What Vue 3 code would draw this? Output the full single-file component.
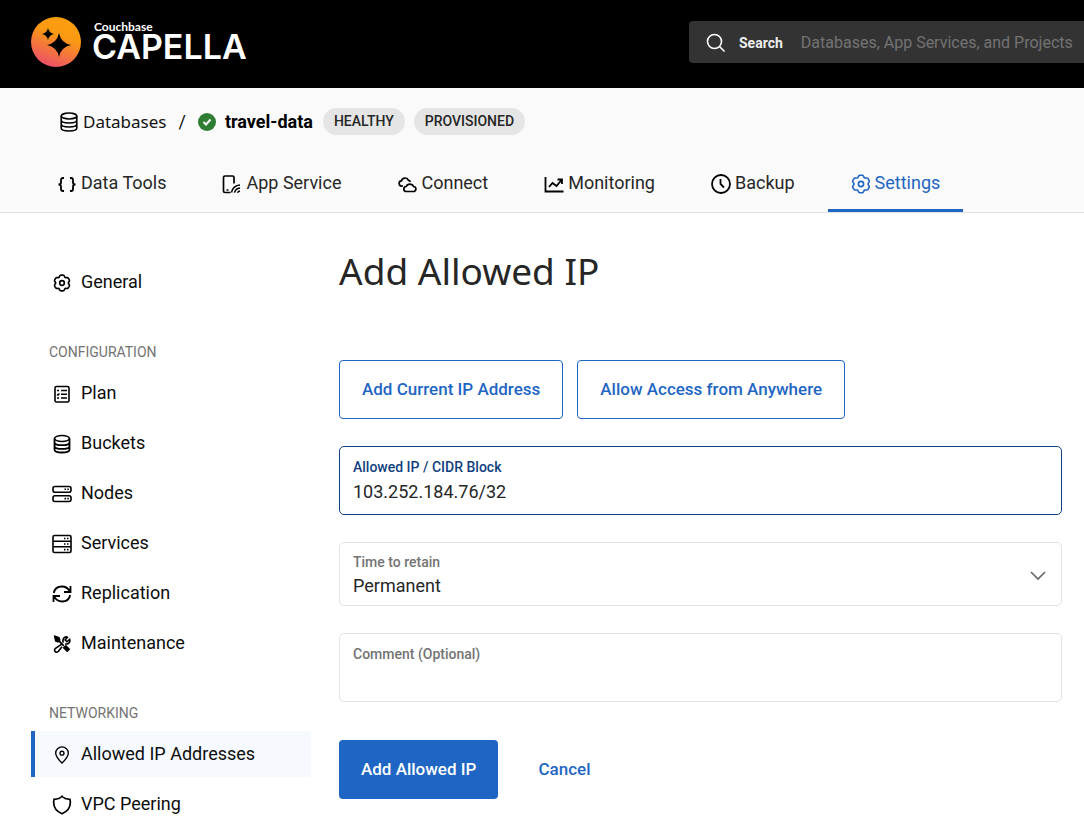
<script setup>
import { ref } from 'vue'

const ip = ref('103.252.184.76/32')
const retain = ref('Permanent')
const comment = ref('')
const search = ref('')

// Six-lobed cog outline, sampled around the centre
const cog = Array.from({ length: 72 }, (_, i) => {
  const a = (i * Math.PI) / 36
  const r = 8.2 - 0.9 * Math.cos(6 * a) - 0.3 * Math.cos(12 * a)
  return `${(10 + r * Math.cos(a)).toFixed(2)} ${(10 + r * Math.sin(a)).toFixed(2)}`
}).join('L')
const gear = `<path d="M${cog}z"/><circle cx="10" cy="10" r="2.600"/>`

const tabs = [
  { name: 'Data Tools', icon: '<path d="M7 4H6Q4 4 4 6V8.500Q4 10.500 1.500 10.500Q4 10.500 4 12.500V15Q4 17 6 17H7M13 4h1q2 0 2 2V8.500q0 2 2.500 2q-2.500 0-2.500 2V15q0 2-2 2h-1" stroke-width="1.800"/>' },
  { name: 'App Service', icon: '<path d="M8.500 18.500H3Q1.500 18.500 1.500 17V3.500Q1.500 2 3 2h7.500q1.500 0 1.500 1.500V9.500M4.500 16h2" stroke-width="1.700"/><path d="M9.500 18.500Q11 11.500 18 11M12.500 18.700Q13.500 14.500 18 14M15.500 18.800Q16 17.300 18 17" stroke-width="1.500"/>' },
  { name: 'Connect', icon: '<path d="M6 12H5A2.600 2.600 0 0 1 4.500 6.800A3.700 3.700 0 0 1 11.500 6.300Q13 6.500 13.300 8M9.500 17.500a2.500 2.500 0 0 1-.3-5a4 4 0 0 1 7.300 0a2.500 2.500 0 0 1-.2 5z" stroke-width="1.700"/>' },
  { name: 'Monitoring', icon: '<path d="M1.500 3v14.500H19.500M5 13l3.500-4 4 3L17.500 6M13.500 5.500h4.500V10" stroke-width="1.800"/>' },
  { name: 'Backup', icon: '<circle cx="10" cy="10" r="9" stroke-width="1.800"/><path d="M9.500 5v5l3.500 3.500" stroke-width="1.800"/>' },
  { name: 'Settings', active: true, icon: gear }
]

const groups = [
  { items: [{ name: 'General', small: true, icon: gear }] },
  {
    title: 'CONFIGURATION',
    items: [
      { name: 'Plan', icon: '<rect x="3" y="2.500" width="14" height="15.500" rx="1.500"/><path d="M9 6.500h6M9 10.250h6M9 14h6M5 6.500h2M5 14h2M5 10.500l1 .5 1.500-1.500" stroke-width="1.500"/>' },
      { name: 'Buckets', icon: '<ellipse cx="10" cy="4.500" rx="7.500" ry="3"/><path d="M2.500 4.500V15.500C2.500 19.500 17.500 19.500 17.500 15.500V4.500M2.500 8.200c0 4 15 4 15 0M2.500 11.900c0 4 15 4 15 0" stroke-width="1.800"/>' },
      { name: 'Nodes', icon: '<rect x="1" y="2.500" width="18" height="5.700" rx="2"/><rect x="1" y="11.800" width="18" height="5.700" rx="2"/><path d="M12.500 5.300h1.500M15.300 5.300h1.500M12.500 14.600h1.500M15.300 14.600h1.500"/>' },
      { name: 'Services', icon: '<rect x="1" y="1.500" width="18" height="17" rx="1.500"/><path d="M1 7.200h18M1 12.800h18M12 4.500h1.500M15 4.500h1.500M12 10h1.500M15 10h1.500M12 15.600h1.500M15 15.600h1.500"/>' },
      { name: 'Replication', icon: '<path d="M1.800 9Q3 2.500 10 2.500Q15 2.500 18 7.500M18.500 2v6h-6.500M18.200 11Q17 17.500 10 17.500Q5 17.500 2 12.500M1.500 18v-6H8" stroke-width="1.800"/>' },
      { name: 'Maintenance', small: true, icon: '<path d="M2 1.500l4.500 1.500 1 2.500-2 2-2.500-1z" fill="currentColor"/><path d="M6 6l6 6" stroke-width="2"/><path d="M12.500 12.500l5 5" stroke-width="5"/><path d="M10.500 9.500L2.500 15q-1.500 2 0 3.500t3.500-.5l4-5M11.500 8.500q-1.500-4 1.500-6 2-.8 3 0l-2.500 3 2 2 3-2.500q1 3-1.500 4.500-2 1-3.500 0"/>' }
    ]
  },
  {
    title: 'NETWORKING',
    items: [
      { name: 'Allowed IP Addresses', small: true, active: true, icon: '<path d="M10 19Q3 12 3 8a7 7 0 0 1 14 0Q17 12 10 19z" stroke-width="1.500"/><circle cx="10" cy="8" r="2.200" stroke-width="1.500"/>' },
      { name: 'VPC Peering', icon: '<path d="M10 1.200Q12.500 4 18 4.300Q20 14.500 10 18.800Q0 14.500 2 4.300Q7.500 4 10 1.200z" stroke-width="1.700"/>' }
    ]
  }
]
</script>

<template>
  <div class="page">
    <header class="topbar">
      <a href="#" class="brand">
        <svg class="brand-mark" viewBox="0 0 50 50" aria-hidden="true">
          <defs>
            <linearGradient id="sunrise" x1=".3" y1="1" x2=".7" y2="0">
              <stop offset="0" stop-color="#ec4d6c" />
              <stop offset=".65" stop-color="#fb9a12" />
              <stop offset="1" stop-color="#fd9f0e" />
            </linearGradient>
          </defs>
          <circle cx="25" cy="25" r="25" fill="url(#sunrise)" />
          <path d="M28 16Q30 26 40 28Q30 30 28 40Q26 30 16 28Q26 26 28 16zM17 11Q18 16 23 17Q18 18 17 23Q16 18 11 17Q16 16 17 11z" />
        </svg>
        <span class="brand-text">
          <span class="brand-top">Couchbase</span>
          <span class="brand-name">CAPELLA</span>
        </span>
      </a>
      <div class="search">
        <svg viewBox="0 0 20 20" class="search-icon" aria-hidden="true"><circle cx="8.500" cy="8.500" r="7" /><path d="M13.500 13.500l5 5" /></svg>
        <label for="search">Search</label>
        <input id="search" v-model="search" type="text" placeholder="Databases, App Services, and Projects">
      </div>
    </header>

    <div class="subheader">
      <div class="crumbs">
        <a href="#" class="crumb">
          <svg class="icon" viewBox="0 0 20 20" aria-hidden="true"><ellipse cx="10" cy="4" rx="7.800" ry="3" /><path d="M2.200 4v12c0 4 15.600 4 15.600 0V4M2.200 8c0 4 15.600 4 15.600 0M2.200 12c0 4 15.600 4 15.600 0" /></svg>
          Databases
        </a>
        <span class="slash">/</span>
        <svg class="check" viewBox="0 0 18 18" aria-hidden="true"><circle cx="9" cy="9" r="9" /><path d="M5.500 9l2.500 2.500 4.500-5" /></svg>
        <strong class="db-name">travel-data</strong>
        <span class="pill">HEALTHY</span>
        <span class="pill">PROVISIONED</span>
      </div>
      <nav class="tabs" aria-label="Database">
        <a v-for="t in tabs" :key="t.name" href="#" class="tab" :class="{ active: t.active }">
          <span class="icon-box"><svg class="icon" viewBox="0 0 20 20" aria-hidden="true" v-html="t.icon"></svg></span>
          {{ t.name }}
        </a>
      </nav>
    </div>

    <div class="body">
      <nav class="sidebar" aria-label="Settings">
        <section v-for="(g, i) in groups" :key="i" class="group">
          <h2 v-if="g.title">{{ g.title }}</h2>
          <a v-for="it in g.items" :key="it.name" href="#" class="side-item" :class="{ active: it.active, small: it.small }">
            <span class="icon-box"><svg class="icon" viewBox="0 0 20 20" aria-hidden="true" v-html="it.icon"></svg></span>
            {{ it.name }}
          </a>
        </section>
      </nav>

      <main>
        <h1>Add Allowed IP</h1>
        <form @submit.prevent>
          <div class="quick">
            <button type="button" class="btn outline">Add Current IP Address</button>
            <button type="button" class="btn outline">Allow Access from Anywhere</button>
          </div>
          <div class="field tall focus">
            <label for="ip">Allowed IP / CIDR Block</label>
            <input id="ip" v-model="ip" type="text">
          </div>
          <div class="field">
            <label for="retain">Time to retain</label>
            <select id="retain" v-model="retain"><option>Permanent</option></select>
            <svg class="chevron" viewBox="0 0 16 10" aria-hidden="true"><path d="M1 1l7 7 7-7" /></svg>
          </div>
          <div class="field tall">
            <label for="comment">Comment (Optional)</label>
            <input id="comment" v-model="comment" type="text">
          </div>
          <div class="actions">
            <button type="submit" class="btn primary">Add Allowed IP</button>
            <button type="button" class="btn text">Cancel</button>
          </div>
        </form>
      </main>
    </div>
  </div>
</template>

<style>
body { margin: 0; background: #fff; }
</style>

<style scoped>
.page { font-family: Roboto, "Liberation Sans", sans-serif; font-size: 18px; line-height: 24px; color: #262626; overflow: hidden; }
.page * { box-sizing: border-box; }
a { color: inherit; text-decoration: none; }
input, select, button { font: inherit; color: inherit; margin: 0; }
.icon { width: 20px; height: 20px; flex: none; fill: none; stroke: currentColor; stroke-width: 1.6; color: #000; }
.icon-box { width: 20px; flex: none; display: flex; justify-content: center; padding-top: 2px; }

.topbar { height: 88px; background: #000; display: flex; align-items: center; justify-content: space-between; padding: 0 0 4px 31px; color: #fff; }
.brand { display: flex; align-items: center; gap: 11px; }
.brand-mark { width: 50px; height: 50px; }
.brand-text { display: flex; flex-direction: column; padding-bottom: 4px; }
.brand-top { font: 700 12px/14px Lato, sans-serif; padding-left: 2px; }
.brand-name { font: 600 34px/26px Inter, sans-serif; }
.search { width: 395px; height: 42px; background: #333; border-radius: 4px 0 0 4px; display: flex; align-items: center; padding: 1px 0 0 17px; }
.search-icon { width: 20px; height: 20px; fill: none; stroke: #fff; stroke-width: 1.6; flex: none; }
.search label { font-size: 14px; font-weight: 700; margin: 0 18px 0 13px; color: #eee; }
.search input { flex: 1; min-width: 0; background: none; border: 0; outline: 0; padding: 0; font-size: 16px; color: #fff; }
.search input::placeholder { color: #737373; opacity: 1; }

.subheader { background: #fafafa; border-bottom: 1px solid #e2e2e2; }
.crumbs { display: flex; align-items: center; height: 67px; padding-left: 59px; }
.crumb { display: flex; align-items: center; gap: 4px; font: 17px/24px "Noto Sans", sans-serif; color: #111; }
.slash { margin: 0 12px; color: #111; }
.check { width: 18px; height: 18px; fill: #2e7d32; }
.check path { fill: none; stroke: #fff; stroke-width: 2; }
.db-name { margin: 0 10px 0 9px; color: #000; }
.pill { height: 27px; line-height: 27px; border-radius: 14px; padding: 0 11px; margin-right: 9px; background: #e5e5e5; font-size: 14px; font-weight: 500; }
.tabs { display: flex; gap: 10px; height: 57px; padding-left: 34px; }
.tab { display: flex; align-items: center; gap: 4px; padding: 2px 23px 0; white-space: nowrap; border-bottom: 3px solid transparent; }
.tab.active, .tab.active .icon { color: #1f66c4; }
.tab.active { border-color: #1f66c4; }

.body { display: flex; gap: 28px; padding-left: 31px; }
.sidebar { width: 280px; flex: none; padding-top: 46px; }
.group { display: flex; flex-direction: column; gap: 4px; margin-bottom: 39px; }
h2 { margin: 0 0 6px; padding-left: 18px; font-size: 14px; line-height: 16px; font-weight: 400; color: #737373; }
.side-item { display: flex; align-items: center; gap: 9px; height: 46px; padding-left: 17px; border-left: 4px solid transparent; color: #0d0d0d; }
.side-item.active { background: #f6faff; border-color: #1f66c4; }
.small .icon { width: 18px; height: 18px; stroke-width: 1.8; }

main { flex: 1; min-width: 0; padding: 34px 22px 28px 0; }
h1 { margin: 0 0 65px; font: 400 37px/48px "Noto Sans", sans-serif; }
form { display: flex; flex-direction: column; gap: 27px; }
.quick { display: flex; gap: 14px; }
.btn { height: 59px; padding: 0 22px 2px; border: 0; border-radius: 4px; background: none; font-size: 17px; font-weight: 500; color: #1f66c4; white-space: nowrap; }
.btn.outline { border: 1px solid #1f66c4; background: #fff; }
.btn.primary { background: #1f66c4; color: #fff; }
.btn.text { padding: 0 0 2px; }
.field { position: relative; height: 64px; border: 1px solid #e2e2e2; border-radius: 5px; padding: 9px 13px 0; display: flex; flex-direction: column; }
.field.tall { height: 69px; padding-top: 10px; }
.field.focus { border-color: #113f7e; }
.field label { font-size: 14px; line-height: 20px; font-weight: 500; color: #737373; }
.field.focus label { color: #113f7e; }
.field input, .field select { width: 100%; height: 28px; flex: none; padding: 0; border: 0; outline: 0; background: transparent; appearance: none; }
.chevron { position: absolute; right: 15px; top: 28px; width: 16px; height: 10px; fill: none; stroke: #666; stroke-width: 1.6; pointer-events: none; }
.actions { display: flex; gap: 40px; padding-top: 11px; }
</style>
